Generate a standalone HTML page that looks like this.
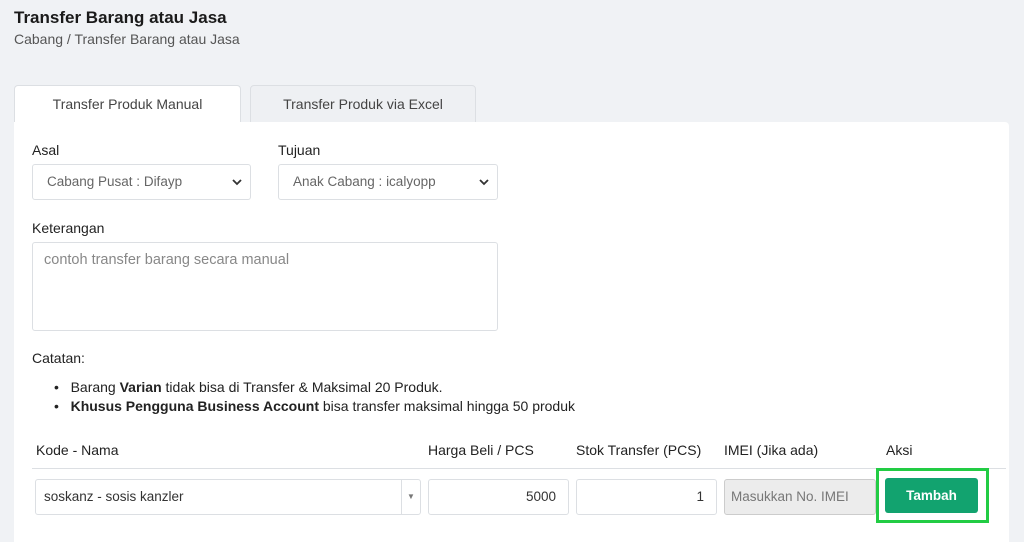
<!DOCTYPE html><html><head><style>
*{box-sizing:border-box;margin:0;padding:0}
body{width:1024px;height:531px;overflow:hidden;background:#f0f2f5;font-family:"Liberation Sans",sans-serif;color:#222;position:relative}
.a{position:absolute}
h1{position:absolute;left:14px;top:8px;font-size:17px;font-weight:bold;color:#1a1a1a}
.bc{left:14px;top:31px;font-size:14px;color:#555}
.tab{top:85px;height:38px;border:1px solid #dcdfe3;border-radius:4px 4px 0 0;font-size:14px;color:#444;text-align:center;line-height:36px}
.card{left:14px;top:122px;width:995px;height:420px;background:#fff;border-radius:0 4px 0 0}
.lbl{font-size:14px;color:#222}
.sel{height:36px;border:1px solid #dcdfe3;border-radius:3px;background:#fff;font-size:13.5px;color:#666;padding-left:14px;line-height:34px}
.sel svg{position:absolute;right:8px;top:13px}
.n{font-size:14px}
.inp{height:36px;border:1px solid #dcdfe3;border-radius:3px;background:#fff;font-size:13.5px;line-height:34px;color:#333}
</style></head><body>
<h1>Transfer Barang atau Jasa</h1>
<div class="a bc">Cabang / Transfer Barang atau Jasa</div>
<div class="a tab" style="left:14px;width:227px;background:#fff;border-bottom:none;height:39px">Transfer Produk Manual</div>
<div class="a tab" style="left:250px;width:226px;background:#eef0f3">Transfer Produk via Excel</div>
<div class="a card"></div>
<div class="a lbl" style="left:32px;top:142px">Asal</div>
<div class="a lbl" style="left:278px;top:142px">Tujuan</div>
<div class="a sel" style="left:32px;top:164px;width:219px">Cabang Pusat : Difayp<svg width="10" height="8" viewBox="0 0 10 8"><path d="M1 2l4 4 4-4" fill="none" stroke="#333" stroke-width="1.8"/></svg></div>
<div class="a sel" style="left:278px;top:164px;width:220px">Anak Cabang : icalyopp<svg width="10" height="8" viewBox="0 0 10 8"><path d="M1 2l4 4 4-4" fill="none" stroke="#333" stroke-width="1.8"/></svg></div>
<div class="a lbl" style="left:32px;top:220px">Keterangan</div>
<div class="a" style="left:32px;top:242px;width:466px;height:89px;border:1px solid #dcdfe3;border-radius:3px;font-size:14.5px;color:#888;padding:9px 11px">contoh transfer barang secara manual</div>
<div class="a n" style="left:32px;top:350px">Catatan:</div>
<div class="a n" style="left:54px;top:378px;line-height:19px">•&nbsp;&nbsp; Barang <b>Varian</b> tidak bisa di Transfer &amp; Maksimal 20 Produk.<br>•&nbsp;&nbsp; <b>Khusus Pengguna Business Account</b> bisa transfer maksimal hingga 50 produk</div>
<div class="a n" style="left:36px;top:442px">Kode - Nama</div>
<div class="a n" style="left:428px;top:442px">Harga Beli / PCS</div>
<div class="a n" style="left:576px;top:442px">Stok Transfer (PCS)</div>
<div class="a n" style="left:724px;top:442px">IMEI (Jika ada)</div>
<div class="a n" style="left:886px;top:442px">Aksi</div>
<div class="a" style="left:32px;top:468px;width:974px;height:1px;background:#dcdfe3"></div>
<div class="a inp" style="left:35px;top:479px;width:386px;padding-left:8px">soskanz - sosis kanzler<div class="a" style="right:0;top:0;width:19px;height:34px;border-left:1px solid #dcdfe3;font-size:8px;color:#777;text-align:center">▼</div></div>
<div class="a inp" style="left:428px;top:479px;width:141px;text-align:right;padding-right:12px">5000</div>
<div class="a inp" style="left:576px;top:479px;width:141px;text-align:right;padding-right:12px">1</div>
<div class="a inp" style="left:724px;top:479px;width:152px;background:#ececec;color:#777;padding-left:6px;border-color:#ccc">Masukkan No. IMEI</div>
<div class="a" style="left:876px;top:468px;width:113px;height:55px;border:3px solid #22cc44"></div>
<div class="a" style="left:885px;top:478px;width:93px;height:35px;background:#12a36f;border-radius:3px;color:#fff;font-size:13.5px;font-weight:bold;text-align:center;line-height:35px">Tambah</div>
</body></html>
